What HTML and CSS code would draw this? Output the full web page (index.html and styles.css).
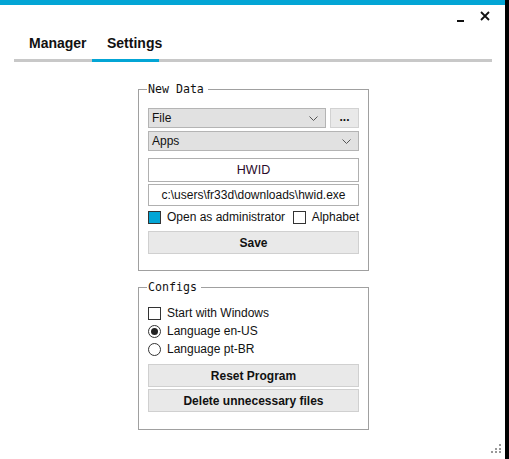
FILE: index.html
```html
<!DOCTYPE html>
<html lang="en">
<head>
  <meta charset="UTF-8" />
  <title>Settings</title>
  <link rel="stylesheet" href="styles.css">
</head>
<body>
  <div class="window">
    <div class="top-bar"></div>

    <div class="title-row">
      <span class="min-btn"><svg width="8" height="3"><rect x="0" y="0" width="7" height="2" fill="#111"/></svg></span>
      <span class="close-btn"><svg width="10" height="10"><path d="M1 1 L9 9 M9 1 L1 9" stroke="#111" stroke-width="1.8"/></svg></span>
    </div>

    <nav class="tabs">
      <a href="#" class="tab tab-manager">Manager</a>
      <a href="#" class="tab tab-settings active">Settings</a>
    </nav>

    <fieldset class="group new-data">
      <legend>New Data</legend>

      <div class="row">
        <div class="combo combo-file">
          <span>File</span>
          <svg class="arrow" width="9" height="5"><path d="M0.5 0.5 L4.5 4.5 L8.5 0.5" fill="none" stroke="#555"/></svg>
        </div>
        <button type="button" class="dots-btn">...</button>
      </div>

      <div class="combo combo-apps">
        <span>Apps</span>
        <svg class="arrow" width="9" height="5"><path d="M0.5 0.5 L4.5 4.5 L8.5 0.5" fill="none" stroke="#555"/></svg>
      </div>

      <input type="text" class="textbox hwid" value="HWID" />
      <input type="text" class="textbox path" value="c:\users\fr33d\downloads\hwid.exe" />

      <div class="check-row">
        <label class="check"><span class="box checked"></span>Open as administrator</label>
        <label class="check"><span class="box"></span>Alphabet</label>
      </div>

      <button type="button" class="btn save">Save</button>
    </fieldset>

    <fieldset class="group configs">
      <legend>Configs</legend>

      <label class="check option"><span class="box"></span>Start with Windows</label>
      <label class="check option"><span class="radio on"></span>Language en-US</label>
      <label class="check option"><span class="radio"></span>Language pt-BR</label>

      <button type="button" class="btn reset">Reset Program</button>
      <button type="button" class="btn delete">Delete unnecessary files</button>
    </fieldset>

    <svg class="grip" width="12" height="12">
      <rect x="9" y="1" width="2" height="2" fill="#999"/>
      <rect x="5" y="5" width="2" height="2" fill="#999"/>
      <rect x="9" y="5" width="2" height="2" fill="#999"/>
      <rect x="1" y="8" width="2" height="2" fill="#999"/>
      <rect x="5" y="8" width="2" height="2" fill="#999"/>
      <rect x="9" y="8" width="2" height="2" fill="#999"/>
    </svg>
  </div>
</body>
</html>
```

FILE: styles.css
```css
body {
  margin: 0;
  background: #000;
  font-family: 'Liberation Sans', Arial, sans-serif;
  font-size: 12px;
  color: #111;
}

.window {
  position: relative;
  width: 505px;
  height: 459px;
  background: #fff;
  overflow: hidden;
}

.top-bar {
  height: 5px;
  background: #03a5d5;
}

.title-row {
  height: 25px;
  display: flex;
  justify-content: flex-end;
  align-items: flex-start;
  padding-right: 15px;
}
.title-row .min-btn {
  margin-top: 14px;
  margin-right: 15px;
  line-height: 0;
}
.title-row .close-btn {
  margin-top: 6px;
  line-height: 0;
}

.tabs {
  display: flex;
  margin: 0 13px 0 14px;
  height: 29px;
  border-bottom: 3px solid #c8c8c8;
}
.tab {
  display: block;
  box-sizing: border-box;
  height: 32px;
  padding: 5px 0 0 15px;
  margin-bottom: -3px;
  font-size: 14px;
  font-weight: bold;
  color: #111;
  text-decoration: none;
  border-bottom: 3px solid transparent;
}
.tab-manager { width: 78px; }
.tab-settings { width: 67px; }
.tab.active { border-bottom-color: #03a5d5; }

.group {
  width: 231px;
  box-sizing: border-box;
  margin: 20px 0 0 138px;
  border: 1px solid #a0a0a0;
  padding: 12px 9px 16px;
}
.group legend {
  margin-left: -1px;
  padding: 0 4px 0 1px;
  font-family: 'DejaVu Sans Mono', 'Liberation Mono', monospace;
  font-size: 11.6px;
  line-height: 14px;
  color: #111;
}
.configs {
  margin-top: 9px;
  padding: 10px 9px 17px;
}

.row {
  display: flex;
  gap: 4px;
}

.combo {
  box-sizing: border-box;
  height: 20px;
  background: #e1e1e1;
  border: 1px solid #b4b4b4;
  display: flex;
  align-items: center;
  justify-content: space-between;
  padding: 0 7px 0 3px;
}
.combo-file { width: 178px; }
.combo-apps { margin-top: 3px; }

.dots-btn {
  width: 29px;
  height: 20px;
  box-sizing: border-box;
  background: #e9e9e9;
  border: 1px solid #d2d2d2;
  font: bold 12px 'Liberation Sans', Arial, sans-serif;
  line-height: 12px;
  padding: 0 0 2px;
  color: #111;
}

.textbox {
  display: block;
  width: 100%;
  box-sizing: border-box;
  border: 1px solid #b0b0b0;
  background: #fff;
  text-align: center;
  font: 12px 'Liberation Sans', Arial, sans-serif;
  color: #111;
  padding: 0;
}
.hwid {
  margin-top: 7px;
  height: 24px;
  font-size: 12.5px;
  color: #2a0a2a;
}
.path {
  margin-top: 2px;
  height: 22px;
}

.check-row {
  display: flex;
  justify-content: space-between;
  height: 18px;
  margin-top: 2px;
}
.check {
  display: flex;
  align-items: center;
  gap: 6px;
  height: 18px;
}
.option { height: 18px; }

.box {
  width: 13px;
  height: 13px;
  box-sizing: border-box;
  border: 1px solid #333;
  background: #fff;
}
.box.checked {
  background: #03a5d5;
}
.radio {
  width: 13px;
  height: 13px;
  box-sizing: border-box;
  border: 1px solid #333;
  border-radius: 50%;
  background: #fff;
  display: flex;
  align-items: center;
  justify-content: center;
}
.radio.on::after {
  content: "";
  width: 7px;
  height: 7px;
  border-radius: 50%;
  background: #222;
}

.btn {
  display: block;
  width: 100%;
  height: 23px;
  box-sizing: border-box;
  background: #e9e9e9;
  border: 1px solid #d0d0d0;
  font: bold 12px 'Liberation Sans', Arial, sans-serif;
  color: #111;
  padding: 0;
}
.save { margin-top: 5px; }
.reset { margin-top: 6px; }
.delete { margin-top: 2px; }

.grip {
  position: absolute;
  right: 3px;
  bottom: 4px;
}
```
